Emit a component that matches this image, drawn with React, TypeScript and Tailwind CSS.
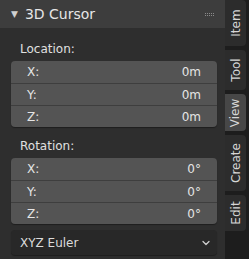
import { ChevronDown } from 'lucide-react'

const FONT = { fontFamily: '"DejaVu Sans", "Noto Sans", sans-serif' }

const TABS = [
  { label: 'Item', h: 'h-[46px]', active: false },
  { label: 'Tool', h: 'h-[40px]', active: false },
  { label: 'View', h: 'h-[37px]', active: true },
  { label: 'Create', h: 'h-[56px]', active: false },
  { label: 'Edit', h: 'h-[36px]', active: false },
]

function FieldGroup({ rows }: { rows: [string, string][] }) {
  return (
    <div className="mx-[11px] w-[206px] overflow-hidden rounded-[4px] bg-[#545454] shadow-[0_1px_1px_rgba(0,0,0,0.35)]">
      {rows.map(([k, v], i) => (
        <div
          key={k}
          className={
            'flex h-[22px] items-center justify-between pl-[16px] pr-[16px] text-[12px] text-[#e5e5e5] ' +
            (i > 0 ? 'border-t border-[#3e3e3e]' : '')
          }
        >
          <span>{k}</span>
          <span>{v}</span>
        </div>
      ))}
    </div>
  )
}

export default function App() {
  return (
    <div className="flex h-[259px] w-[249px] bg-[#1d1d1d]" style={FONT}>
      <div className="flex w-[225px] flex-col bg-[#2e2e2e]">
        {/* panel header */}
        <div className="flex h-[28px] shrink-0 items-center bg-[#3d3d3d] pl-[11px] pr-[10px]">
          <span className="text-[9px] leading-none text-[#d0d0d0]">▼</span>
          <span className="ml-[7px] text-[14px] text-[#e6e6e6]">3D Cursor</span>
          <div className="ml-auto mr-[1px] grid grid-cols-5 gap-x-[1px] gap-y-[1px]">
            {Array.from({ length: 10 }).map((_, i) => (
              <span key={i} className="h-[1px] w-[1px] bg-[#8a8a8a]" />
            ))}
          </div>
        </div>

        <div className="flex flex-col pt-[10px]">
          <div className="h-[23px] pl-[20px] text-[12px] leading-[23px] text-[#e0e0e0]">Location:</div>
          <FieldGroup rows={[['X:', '0m'], ['Y:', '0m'], ['Z:', '0m']]} />
          <div className="mt-[7px] h-[24px] pl-[20px] text-[12px] leading-[24px] text-[#e0e0e0]">Rotation:</div>
          <FieldGroup rows={[['X:', '0°'], ['Y:', '0°'], ['Z:', '0°']]} />
          <div className="mx-[11px] mt-[6px] flex h-[25px] w-[206px] items-center justify-between rounded-[4px] bg-[#282828] pl-[9px] pr-[5px] text-[12px] text-[#dcdcdc] shadow-[0_1px_1px_rgba(0,0,0,0.35)]">
            <span>XYZ Euler</span>
            <ChevronDown size={12} strokeWidth={2.5} className="text-[#cfcfcf]" />
          </div>
        </div>
      </div>

      {/* tab strip */}
      <div className="flex w-[24px] flex-col gap-[4px]">
        {TABS.map((t) => (
          <div
            key={t.label}
            className={
              'flex w-[21px] items-center justify-center rounded-r-[4px] ' +
              t.h +
              ' ' +
              (t.active ? 'bg-[#474747]' : 'bg-[#2c2c2c]')
            }
          >
            <span className="-rotate-90 whitespace-nowrap text-[12px] text-[#d6d6d6]">{t.label}</span>
          </div>
        ))}
      </div>
    </div>
  )
}
